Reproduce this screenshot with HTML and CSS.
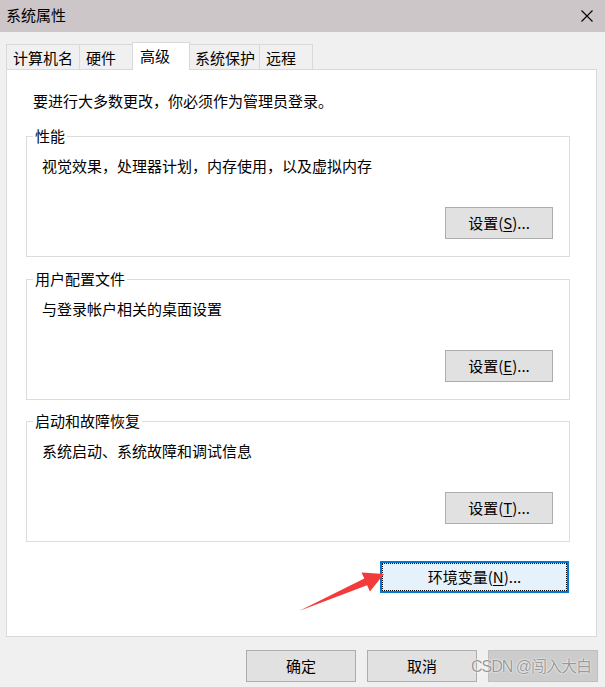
FILE: index.html
```html
<!DOCTYPE html>
<html lang="zh-CN">
<head>
    <meta charset="UTF-8">
    <title>系统属性</title>
    <meta name="viewport" content="width=device-width, initial-scale=1.0">
    <link rel="stylesheet" href="styles.css">
</head>
<body>

    <div class="window">
        <div class="titlebar">
            <span class="title">系统属性</span>
            <svg class="close" width="12" height="12" viewBox="0 0 12 12">
                <path d="M0.5 0.5 L11.5 11.5 M11.5 0.5 L0.5 11.5" stroke="#000" stroke-width="1.1" fill="none"/>
            </svg>
        </div>

        <div class="dialog">
            <div class="tabs">
                <div class="tab">计算机名</div>
                <div class="tab">硬件</div>
                <div class="tab tab-active">高级</div>
                <div class="tab tab-narrow">系统保护</div>
                <div class="tab">远程</div>
            </div>

            <div class="panel">
                <p class="intro">要进行大多数更改，你必须作为管理员登录。</p>

                <fieldset class="group">
                    <legend>性能</legend>
                    <p class="desc">视觉效果，处理器计划，内存使用，以及虚拟内存</p>
                    <div class="group-actions">
                        <button class="btn">设置(<u>S</u>)...</button>
                    </div>
                </fieldset>

                <fieldset class="group">
                    <legend>用户配置文件</legend>
                    <p class="desc">与登录帐户相关的桌面设置</p>
                    <div class="group-actions">
                        <button class="btn">设置(<u>E</u>)...</button>
                    </div>
                </fieldset>

                <fieldset class="group group-last">
                    <legend>启动和故障恢复</legend>
                    <p class="desc">系统启动、系统故障和调试信息</p>
                    <div class="group-actions">
                        <button class="btn">设置(<u>T</u>)...</button>
                    </div>
                </fieldset>

                <button class="btn btn-env">环境变量(<u>N</u>)...</button>
            </div>

            <div class="footer">
                <button class="btn btn-footer">确定</button>
                <button class="btn btn-footer">取消</button>
                <button class="btn btn-footer btn-disabled" disabled></button>
            </div>
        </div>

        <!-- 标注箭头 -->
        <svg class="arrow" width="605" height="687" viewBox="0 0 605 687">
            <polygon points="299,611 364.3,578.6 361.5,572.4 384,574 369.9,591.5 367.1,585.2" fill="#f23b3b"/>
        </svg>

        <div class="watermark">CSDN @闯入大白</div>
    </div>

</body>
</html>
```

FILE: styles.css
```css
/* 重置默认样式 */
* {
    margin: 0;
    padding: 0;
    box-sizing: border-box;
}

body {
    font-family: "Noto Sans CJK SC", "Noto Sans", sans-serif;
    font-size: 15px;
    line-height: 20px;
    color: #000;
    background-color: #f0f0f0;
}

.window {
    position: relative;
    width: 605px;
    height: 687px;
    overflow: hidden;
    background-color: #f0f0f0;
}

.titlebar {
    height: 32px;
    display: flex;
    align-items: center;
    justify-content: space-between;
    padding-left: 6px;
    background-color: #ccc6c9;
}

.title {
    margin-top: -2px;
}

.close {
    margin-right: 12px;
    margin-top: -1px;
}

.dialog {
    padding: 10px 8px 0 6px;
}

/* 选项卡 */
.tabs {
    display: flex;
    align-items: flex-end;
}

.tab {
    height: 25px;
    min-width: 54px;
    padding: 3px 6px 0;
    margin-right: -1px;
    border: 1px solid #d9d9d9;
    border-bottom: none;
    background-color: #f0f0f0;
}

.tab-narrow {
    padding: 3px 4px 0 5px;
}

.tab-active {
    position: relative;
    z-index: 1;
    height: 28px;
    min-width: 58px;
    padding: 3px 7px 0;
    margin-bottom: -1px;
    background-color: #fff;
}

.panel {
    display: flex;
    flex-direction: column;
    padding: 21px 26px 43px 19px;
    background-color: #fff;
    border: 1px solid #d9d9d9;
}

.intro {
    margin-left: 7px;
}

/* 分组框 */
.group {
    margin-top: 12px;
    min-width: 0;
    padding: 0 16px 17px 15px;
    border: 1px solid #dcdcdc;
}

.panel .group:first-of-type {
    margin-top: 15px;
}

.group-last {
    margin-top: 11px;
}

.group legend {
    padding: 0 2px;
    margin-left: -9px;
    line-height: 20px;
}

.desc {
    padding-top: 10px;
}

.group-actions {
    display: flex;
    justify-content: flex-end;
    margin-top: 31px;
}

/* 按钮 */
.btn {
    font-family: "Noto Sans CJK SC", "Noto Sans", sans-serif;
    font-size: 15px;
    line-height: 20px;
    color: #000;
    width: 108px;
    height: 32px;
    background-color: #e1e1e1;
    border: 1px solid #adadad;
}

.btn u {
    text-underline-offset: 2px;
}

.btn-env {
    align-self: flex-end;
    width: 189px;
    margin-top: 19px;
    margin-right: 1px;
    background-color: #e5f1fb;
    border: 2px solid #0078d7;
    outline: 1px dotted #000;
    outline-offset: -3px;
}

.footer {
    display: flex;
    justify-content: flex-end;
    gap: 11px;
    margin-top: 13px;
    margin-right: -1px;
}

.btn-footer {
    width: 110px;
}

.btn-disabled {
    background-color: #cccccc;
    border-color: #bfbfbf;
}

.arrow {
    position: absolute;
    left: 0;
    top: 0;
    pointer-events: none;
}

.watermark {
    position: absolute;
    left: 471px;
    top: 656px;
    font-family: "Liberation Sans", "Noto Sans CJK SC", sans-serif;
    font-size: 16px;
    line-height: 22px;
    letter-spacing: -1px;
    color: #9a9a9a;
    text-shadow: 0 0 1px #fff, 0 0 2px #fff;
}
```
